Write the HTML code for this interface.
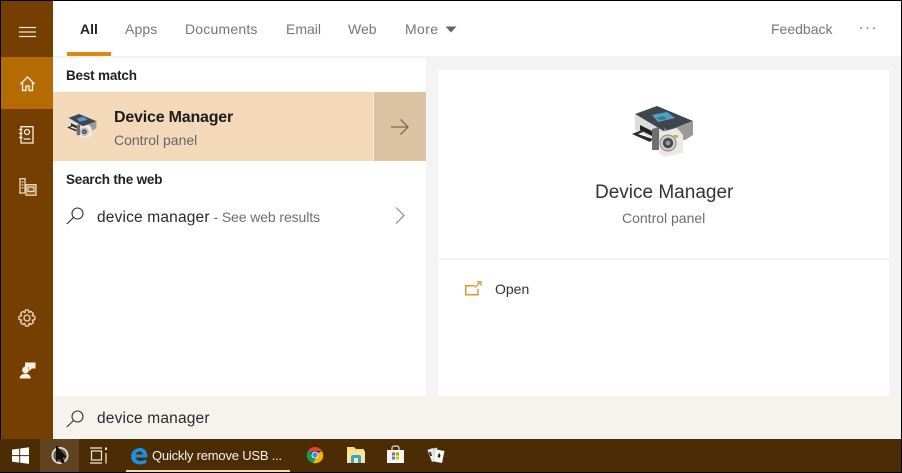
<!DOCTYPE html>
<html><head><meta charset="utf-8">
<style>
html,body{margin:0;padding:0;background:#000;}
#r{position:relative;width:902px;height:473px;overflow:hidden;background:#000;font-family:"Liberation Sans",sans-serif;}
.b{position:absolute;}
.t{position:absolute;white-space:nowrap;line-height:18px;height:18px;}
svg{position:absolute;overflow:visible;}
</style></head><body>
<div id="r">
<div class="b" style="left:1px;top:1px;width:52px;height:438px;background:#743f00"></div>
<div class="b" style="left:1px;top:57px;width:52px;height:52px;background:#b56b03"></div>
<div class="b" style="left:53px;top:1px;width:848px;height:395px;background:#f3f3f3"></div>
<div class="b" style="left:53px;top:1px;width:848px;height:55px;background:#fff"></div>
<div class="b" style="left:53px;top:70px;width:373px;height:326px;background:#fff"></div>
<div class="b" style="left:53px;top:58px;width:373px;height:12px;background:#fff"></div>
<div class="b" style="left:438px;top:70px;width:451px;height:188px;background:#fff"></div>
<div class="b" style="left:438px;top:260px;width:451px;height:136px;background:#fff"></div>
<div class="b" style="left:53px;top:396px;width:848px;height:43px;background:#f6f3ef"></div>
<div class="b" style="left:0;top:439px;width:901px;height:33px;background:#4b2c05"></div>
<div class="b" style="left:40px;top:439px;width:39px;height:33px;background:#60431f"></div>
<div class="b" style="left:126px;top:470px;width:164px;height:2px;background:#f3d8b0"></div>

<!-- tabs -->
<div class="t" style="left:80px;top:20px;font-size:14px;font-weight:bold;color:#222">All</div>
<div class="b" style="left:67px;top:52px;width:44px;height:4px;background:#dc8a0b"></div>
<div class="t" style="left:125px;top:20px;font-size:14px;color:#767676;letter-spacing:.1px">Apps</div>
<div class="t" style="left:185px;top:20px;font-size:14px;color:#767676;letter-spacing:.2px">Documents</div>
<div class="t" style="left:286px;top:20px;font-size:14px;color:#767676">Email</div>
<div class="t" style="left:348px;top:20px;font-size:14px;color:#767676">Web</div>
<div class="t" style="left:405px;top:20px;font-size:14px;color:#767676;letter-spacing:.4px">More</div>
<svg style="left:445px;top:26px" width="12" height="7"><path d="M0.5 0.5H11.5L6 6.5Z" fill="#666"/></svg>
<div class="t" style="left:771px;top:20px;font-size:14px;color:#767676">Feedback</div>
<svg style="left:859px;top:27px" width="18" height="3"><circle cx="2" cy="1.2" r="1" fill="#888"/><circle cx="8.5" cy="1.2" r="1" fill="#888"/><circle cx="15" cy="1.2" r="1" fill="#888"/></svg>

<!-- left results -->
<div class="t" style="left:66px;top:67px;font-size:13.5px;font-weight:bold;color:#222;letter-spacing:-.2px">Best match</div>
<div class="b" style="left:53px;top:92px;width:320px;height:69px;background:#f3d8b9"></div>
<div class="b" style="left:373px;top:92px;width:1px;height:69px;background:#fbeedd"></div>
<div class="b" style="left:374px;top:92px;width:52px;height:69px;background:#dbc2a3"></div>
<div class="t" style="left:114px;top:109px;font-size:16px;font-weight:bold;color:#1c1c1c;letter-spacing:-.2px">Device Manager</div>
<div class="t" style="left:114px;top:131px;font-size:14px;color:#666">Control panel</div>
<svg style="left:390px;top:117px" width="20" height="20" fill="none" stroke="#7d6a55" stroke-width="1.3"><path d="M1 10H18M10.5 2.5L18 10L10.5 17.5"/></svg>
<div class="t" style="left:66px;top:171px;font-size:13.5px;font-weight:bold;color:#222;letter-spacing:-.2px">Search the web</div>
<div class="t" style="left:97px;top:208px;font-size:15.5px;color:#2a2a2a;letter-spacing:.17px">device manager<span style="font-size:14px;color:#6e6e6e;letter-spacing:-.1px"> - See web results</span></div>
<svg style="left:66px;top:207px" width="19" height="19" fill="none" stroke="#333" stroke-width="1.1"><circle cx="11.5" cy="6.5" r="5.5"/><path d="M7.5 10.5L0.8 17"/></svg>
<svg style="left:395px;top:207px" width="11" height="18" fill="none" stroke="#8c8c8c" stroke-width="1.2"><path d="M1 .5L9 8.5L1 16.5"/></svg>

<!-- device icon small -->
<svg style="left:67px;top:114px" width="30" height="25" viewBox="0 0 62 52">
<path d="M3 8L25 0L61 15L33 26Z" fill="#3f464c"/>
<path d="M20 9L35 6L43 12L26 16Z" fill="#4e9fd3"/>
<path d="M3 8L33 26V38L3 24Z" fill="#dcdcdc"/>
<path d="M33 26L61 15V29L53 34L33 32Z" fill="#9a9a9a"/>
<path d="M8 19L20 25V30L8 24Z" fill="#222"/>
<path d="M10 24L0 28L18 36L21 33L6 28L11 26Z" fill="#2a2a2a"/>
<path d="M20 23L27 21V44H20Z" fill="#6f6f6f"/>
<path d="M28 26L45 22L51 29V47L33 51L27 47Z" fill="#ece9e3"/>
<circle cx="36" cy="37" r="8" fill="#cfcfcf" stroke="#888"/>
<circle cx="36" cy="37" r="5.2" fill="#4a4a4a"/><circle cx="36" cy="37" r="2.3" fill="#8ea0ae"/>
</svg>

<!-- right pane -->
<svg style="left:632px;top:106px" width="62" height="52" viewBox="0 0 62 52">
<path d="M3 8L25 0L61 15L33 26Z" fill="#3f464c"/>
<path d="M20 9L35 6L43 12L26 16Z" fill="#4e9fd3"/>
<path d="M24 12L31 10L35 13L28 14Z" fill="#3b7d5c"/>
<path d="M3 8L33 26V38L3 24Z" fill="#dcdcdc"/>
<path d="M33 26L61 15V29L53 34L33 32Z" fill="#9a9a9a"/>
<circle cx="33" cy="23.5" r="1" fill="#3fd06a"/>
<path d="M8 19L20 25V30L8 24Z" fill="#222"/>
<path d="M10 24L0 28L18 36L21 33L6 28L11 26Z" fill="#2a2a2a"/>
<path d="M20 23L27 21V44H20Z" fill="#6f6f6f"/>
<path d="M28 26L45 22L51 29V47L33 51L27 47Z" fill="#ece9e3"/>
<circle cx="36" cy="37" r="8" fill="#cfcfcf" stroke="#888"/>
<circle cx="36" cy="37" r="5.2" fill="#4a4a4a"/><circle cx="36" cy="37" r="2.3" fill="#8ea0ae"/>
<rect x="41" y="29" width="5" height="3" fill="#c8b36a"/>
</svg>
<div class="t" style="left:595px;top:184px;font-size:19px;color:#333">Device Manager</div>
<div class="t" style="left:622px;top:209px;font-size:14px;color:#6e6e6e">Control panel</div>
<svg style="left:465px;top:281px" width="17" height="15" fill="none" stroke="#dd9a2a" stroke-width="1.5"><path d="M10 4.7H0.7V13.8H13V8"/><path d="M10 6.5L15.5 1M12 .8H16V4.8" stroke-width="1.3"/></svg>
<div class="t" style="left:495px;top:280px;font-size:14px;color:#333">Open</div>

<!-- search bar -->
<svg style="left:66px;top:410px" width="19" height="19" fill="none" stroke="#333" stroke-width="1.1"><circle cx="11.5" cy="6.5" r="5.5"/><path d="M7.5 10.5L0.8 17"/></svg>
<div class="t" style="left:97px;top:410px;font-size:15.5px;color:#2a2a2a;letter-spacing:.17px">device manager</div>

<!-- sidebar icons -->
<svg style="left:19px;top:26px" width="18" height="12" stroke="#f3e4cf" stroke-width="1.2"><path d="M0 1.5H17M0 6H17M0 10.5H17"/></svg>
<svg style="left:20px;top:76px" width="16" height="16" fill="none" stroke="#f8efe2" stroke-width="1.4"><path d="M0.5 8L7.5 1L14.5 8M2.5 6.5V14.5H6V10H9V14.5H12.5V6.5"/></svg>
<svg style="left:18px;top:126px" width="16" height="18" fill="none" stroke="#f8efe2" stroke-width="1.3"><path d="M3 .7H15V17H3Z"/><circle cx="9" cy="6" r="2.5"/><path d="M5.5 13H12.5M1 3.5H4.5M1 7.5H4.5M1 11.5H4.5"/></svg>
<svg style="left:18px;top:178px" width="19" height="19" fill="none" stroke="#ecd9bf" stroke-width="1.3"><path d="M7 14.5V.7H2V14.5"/><path d="M1 15H7"/><rect x="8" y="6.7" width="10" height="10.5" fill="#8e5d22"/><rect x="10" y="9" width="6" height="4.5"/><path d="M3.5 4H5.5M3.5 7H5.5M3.5 10H5.5"/></svg>
<svg style="left:18px;top:309px" width="18" height="18" viewBox="0 0 18 18" fill="none" stroke="#ecd9bf" stroke-width="1.3"><path d="M7.5 1H10.5L11 3.4L13 2.4L15.4 4.6L14.3 6.6L16.8 7.4V10.6L14.4 11.2L15.4 13.4L13.2 15.5L11.2 14.4L10.5 17H7.5L6.8 14.5L4.6 15.5L2.5 13.3L3.6 11.2L1 10.5V7.5L3.6 6.8L2.5 4.6L4.7 2.4L6.8 3.5Z"/><circle cx="9" cy="9" r="3"/></svg>
<svg style="left:19px;top:361px" width="17" height="18" fill="#f8efe2"><circle cx="6.5" cy="9" r="3.4"/><path d="M0.5 17.5Q1 12.7 6.5 12.7Q11.5 12.7 11.8 17.5Z"/><path d="M6 1.5H16.5V7.5H13L10 10V6.5H6Z"/></svg>

<!-- taskbar -->
<svg style="left:12px;top:447px" width="17" height="17" fill="#fff"><path d="M0 2.6L7.2 1.6V8.1H0ZM8.2 1.5L17 0.2V8.1H8.2ZM0 9.1H7.2V15.6L0 14.6ZM8.2 9.1H17V16.9L8.2 15.7Z"/></svg>
<svg style="left:51px;top:444px" width="19" height="24"><circle cx="9" cy="11.5" r="7.6" fill="#6b5a48" stroke="#e4e0da" stroke-width="1.8"/><path d="M5 1L16 13.5L11.3 13.5L13.8 18.5L11 19.8L8.4 14.6L5 18Z" fill="#111"/></svg>
<svg style="left:90px;top:447px" width="17" height="17" fill="none" stroke="#f6ecdd" stroke-width="1.2"><path d="M0 1H12M0 16H12"/><rect x="1.5" y="4" width="10" height="9"/><rect x="15" y="0.5" width="2" height="2.5" fill="#f6ecdd" stroke="none"/><path d="M16 6V16.5"/></svg>
<svg style="left:130px;top:447px" width="18" height="18" viewBox="0 0 16 18" preserveAspectRatio="none"><path d="M1 9Q1.5 2 8.5 1Q15.5 1 15.5 10.5H5Q5.5 14 9.5 14Q12 14 14.5 12.5V16Q12 17.5 9 17.5Q1 17 1 9ZM5.2 7.5H11.3Q11 4.5 8.3 4.5Q5.8 4.5 5.2 7.5Z" fill="#1d8fe0"/></svg>
<div class="t" style="left:152px;top:447px;font-size:13px;color:#f7f2ea;letter-spacing:-.2px">Quickly remove USB ...</div>
<svg style="left:307px;top:447px" width="16" height="16" viewBox="0 0 16 16"><path d="M8 0A8 8 0 0 1 15 4H8A4 4 0 0 0 4 6.5L1.5 3A8 8 0 0 1 8 0Z" fill="#db4437"/><path d="M1.5 3L5 9A4 4 0 0 0 8.2 12L6 16A8 8 0 0 1 1.5 3Z" fill="#0f9d58"/><path d="M15 4A8 8 0 0 1 6 16L9.5 10A3 3 0 0 0 11 6Z" fill="#f4b400"/><circle cx="8" cy="8" r="3.1" fill="#4285f4" stroke="#fff" stroke-width=".8"/></svg>
<svg style="left:347px;top:447px" width="18" height="16"><path d="M0 0H7L9 2H17V15H0Z" fill="#f9dc78"/><path d="M0 4H18V16H0Z" fill="#fbe69a"/><path d="M4 16V10Q4 8 6 8H12Q14 8 14 10V16H11V11H7V16Z" fill="#2ea5dc"/></svg>
<svg style="left:387px;top:445px" width="17" height="19"><path d="M5 5V3Q5 1 8.5 1Q12 1 12 3V5" fill="none" stroke="#ddd" stroke-width="1.2"/><rect x="0" y="5" width="17" height="13" fill="#f6f6f6"/><rect x="5" y="7.5" width="3" height="3" fill="#e8491f"/><rect x="9" y="7.5" width="3" height="3" fill="#7eb900"/><rect x="5" y="11.5" width="3" height="3" fill="#00a1f0"/><rect x="9" y="11.5" width="3" height="3" fill="#fdb900"/></svg>
<svg style="left:427px;top:447px" width="18" height="17"><path d="M0.5 3L6 1L10 13L5 15Z" fill="#eee"/><path d="M5 2L10 0.5L12 13L7 14Z" fill="#ddd"/><path d="M9 2.5L17.5 4L15 16L7 14.5Z" fill="#fafafa"/><path d="M12 6Q14.5 8 12.5 11L10.5 9.5Z" fill="#222"/><path d="M2 5L4 5L5 9L3 9Z" fill="#333"/></svg>
</div>
</body></html>
